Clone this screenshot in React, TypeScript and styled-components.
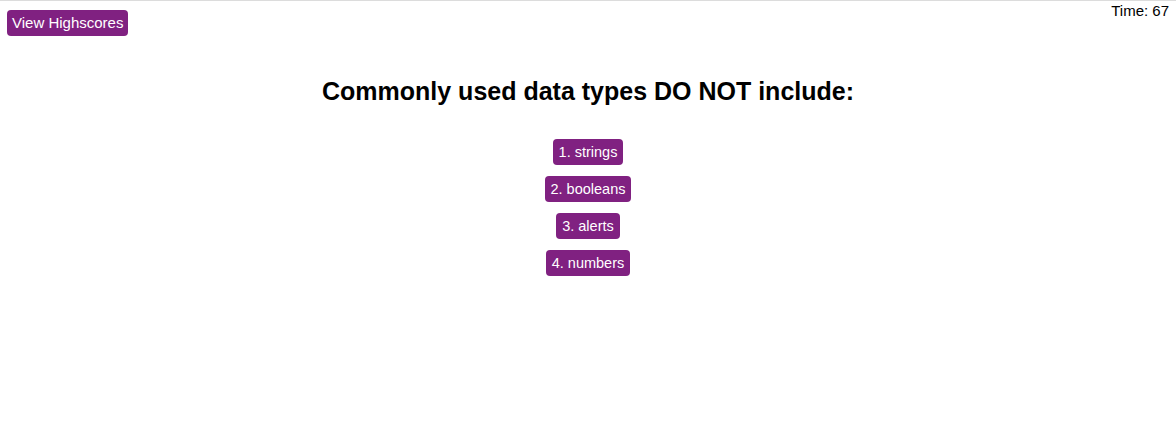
import React from "react";
import styled, { createGlobalStyle } from "styled-components";

const GlobalStyle = createGlobalStyle`
  html, body {
    margin: 0;
    padding: 0;
    background: #ffffff;
    font-family: "Liberation Sans", Arial, Helvetica, sans-serif;
    color: #000;
  }
`;

const Page = styled.div`
  border-top: 1px solid #dcdcdc;
  min-height: 435px;
  box-sizing: border-box;
`;

const TopBar = styled.header`
  display: flex;
  justify-content: space-between;
  align-items: flex-start;
  padding: 0 7px 0 7px;
`;

const PurpleButton = styled.button<{ $size: number; $padX: number }>`
  background: #802181;
  color: #ffffff;
  border: none;
  border-radius: 4px;
  font-family: "Liberation Sans", Arial, Helvetica, sans-serif;
  font-size: ${(p) => p.$size}px;
  line-height: 18px;
  padding: 4px ${(p) => p.$padX}px;
  cursor: pointer;
  white-space: nowrap;
`;

const HighscoreButton = styled(PurpleButton)`
  margin-top: 9px;
`;

const Timer = styled.div`
  font-size: 15px;
  line-height: 18px;
  margin-top: 1px;
`;

const Quiz = styled.main`
  display: flex;
  flex-direction: column;
  align-items: center;
  margin-top: 41px;
`;

const Question = styled.h1`
  font-size: 25px;
  line-height: 29px;
  font-weight: bold;
  margin: 0 0 33px 0;
`;

const Options = styled.div`
  display: flex;
  flex-direction: column;
  align-items: center;
  gap: 11px;
`;

const options = ["1. strings", "2. booleans", "3. alerts", "4. numbers"];

export default function App() {
  return (
    <>
      <GlobalStyle />
      <Page>
        <TopBar>
          <HighscoreButton $size={15} $padX={5}>View Highscores</HighscoreButton>
          <Timer>Time: 67</Timer>
        </TopBar>
        <Quiz>
          <Question>Commonly used data types DO NOT include:</Question>
          <Options>
            {options.map((o) => (
              <PurpleButton key={o} $size={14.5} $padX={6}>
                {o}
              </PurpleButton>
            ))}
          </Options>
        </Quiz>
      </Page>
    </>
  );
}
